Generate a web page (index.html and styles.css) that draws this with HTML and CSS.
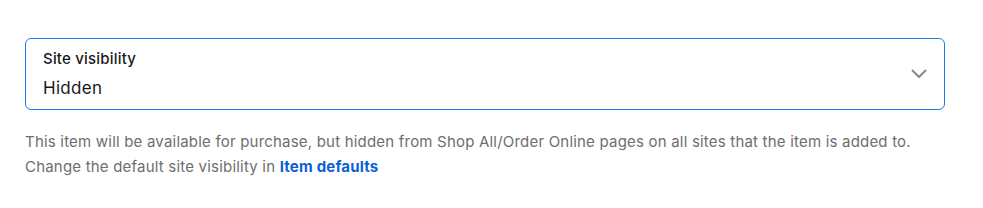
FILE: index.html
```html
<!DOCTYPE html>
<html lang="en">
<head>
    <meta charset="UTF-8">
    <title>Site visibility</title>
    <link rel="stylesheet" href="styles.css">
</head>
<body>
    <div class="field">
        <div class="select-box">
            <div class="select-text">
                <span class="select-label">Site visibility</span>
                <span class="select-value">Hidden</span>
            </div>
            <svg class="chevron" width="16" height="10" viewBox="0 0 16 10">
                <path d="M1.5 1.5 L8 8 L14.5 1.5" fill="none" stroke="#888" stroke-width="2" stroke-linecap="round" stroke-linejoin="round"/>
            </svg>
        </div>
        <p class="help">
            This item will be available for purchase, but hidden from Shop All/Order Online pages on all sites that the item is added to.<br>
            Change the default site visibility in <a href="#">Item defaults</a>
        </p>
    </div>
</body>
</html>
```

FILE: styles.css
```css
body {
    font-family: Inter, "Noto Sans", sans-serif;
    background: #fff;
    margin: 0;
    padding: 38px 38px 0 25px;
}

.field {
    width: 920px;
}

.select-box {
    display: flex;
    justify-content: space-between;
    height: 72px;
    box-sizing: border-box;
    border: 1px solid #1f7aeb;
    border-radius: 6px;
    padding: 10px 17px 0 17px;
}

.select-text {
    display: flex;
    flex-direction: column;
}

.select-label {
    font-size: 15px;
    font-weight: 500;
    letter-spacing: 0.2px;
    color: #1a1a1a;
    line-height: 20px;
}

.select-value {
    font-size: 17px;
    letter-spacing: 0.3px;
    color: #1a1a1a;
    line-height: 24px;
    margin-top: 7px;
}

.chevron {
    align-self: center;
    margin-top: -10px;
}

.help {
    margin: 19px 0 0;
    font-size: 15px;
    letter-spacing: 0.2px;
    line-height: 25px;
    color: #6e6e6e;
}

.help a {
    color: #0b5fd6;
    font-weight: 700;
    text-decoration: none;
}
```
